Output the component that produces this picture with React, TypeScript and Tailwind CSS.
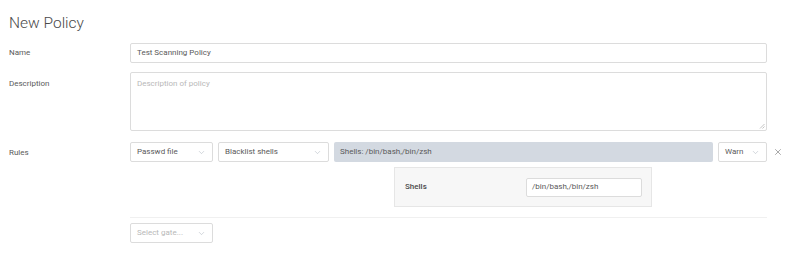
import { ChevronDown, X } from "lucide-react"

function Select({ label, width, placeholder }: { label: string; width: string; placeholder?: boolean }) {
  return (
    <div
      className={`${width} h-[20px] flex items-center justify-between border border-[#dcdcdc] rounded-[2px] bg-white pl-[6px] pr-[6px] shrink-0`}
    >
      <span className={placeholder ? "text-[#b8b8b8]" : "text-[#5a5a5a]"}>{label}</span>
      <ChevronDown className="w-[9px] h-[9px] text-[#b3bac2]" strokeWidth={1.5} />
    </div>
  )
}

export default function App() {
  return (
    <div className="w-[800px] h-[256px] bg-white font-['Roboto',sans-serif] text-[8px] text-[#5a5a5a] pl-[9px] pt-[13px]">
      <h1 className="text-[15.5px] font-light leading-[20px] text-[#4a4a4a] mb-[10px]">New Policy</h1>

      {/* Name */}
      <div className="flex items-center">
        <div className="w-[121px] shrink-0">Name</div>
        <div className="w-[637px] h-[20px] border border-[#dcdcdc] rounded-[2px] flex items-center px-[6px]">
          Test Scanning Policy
        </div>
      </div>

      {/* Description */}
      <div className="flex mt-[9px]">
        <div className="w-[121px] shrink-0 pt-[6px]">Description</div>
        <div className="w-[637px] h-[59px] border border-[#dcdcdc] rounded-[2px] px-[6px] pt-[5px] text-[#b8b8b8] relative">
          Description of policy
          <svg className="absolute right-[1px] bottom-[1px]" width="6" height="6" viewBox="0 0 6 6">
            <path d="M5.5 1 L1 5.5 M5.5 3.5 L3.5 5.5" stroke="#aaa" strokeWidth="0.7" />
          </svg>
        </div>
      </div>

      {/* Rules */}
      <div className="flex mt-[11px]">
        <div className="w-[121px] shrink-0 pt-[5px]">Rules</div>
        <div className="flex flex-col">
          <div className="flex items-center">
            <div className="w-[637px] flex gap-[5px]">
              <Select label="Passwd file" width="w-[83px]" />
              <Select label="Blacklist shells" width="w-[111px]" />
              <div className="flex-1 h-[20px] bg-[#d3d9e1] rounded-[2px] flex items-center px-[6px]">
                Shells: /bin/bash,/bin/zsh
              </div>
              <Select label="Warn" width="w-[49px]" />
            </div>
            <X className="w-[10px] h-[10px] ml-[6px] text-[#777]" strokeWidth={1.5} />
          </div>

          <div className="ml-[264px] mt-[5px] w-[258px] h-[40px] bg-[#f7f7f7] border border-[#e6e6e6] flex items-center pl-[10px] pr-[9px]">
            <div className="w-[121px] font-medium text-[#4a4a4a]">Shells</div>
            <div className="w-[116px] h-[19px] bg-white border border-[#dcdcdc] rounded-[2px] flex items-center px-[5px]">
              /bin/bash,/bin/zsh
            </div>
          </div>

          <div className="w-[637px] border-t border-[#f0f0f0] mt-[10px] pt-[5px]">
            <Select label="Select gate..." width="w-[83px]" placeholder />
          </div>
        </div>
      </div>
    </div>
  )
}
